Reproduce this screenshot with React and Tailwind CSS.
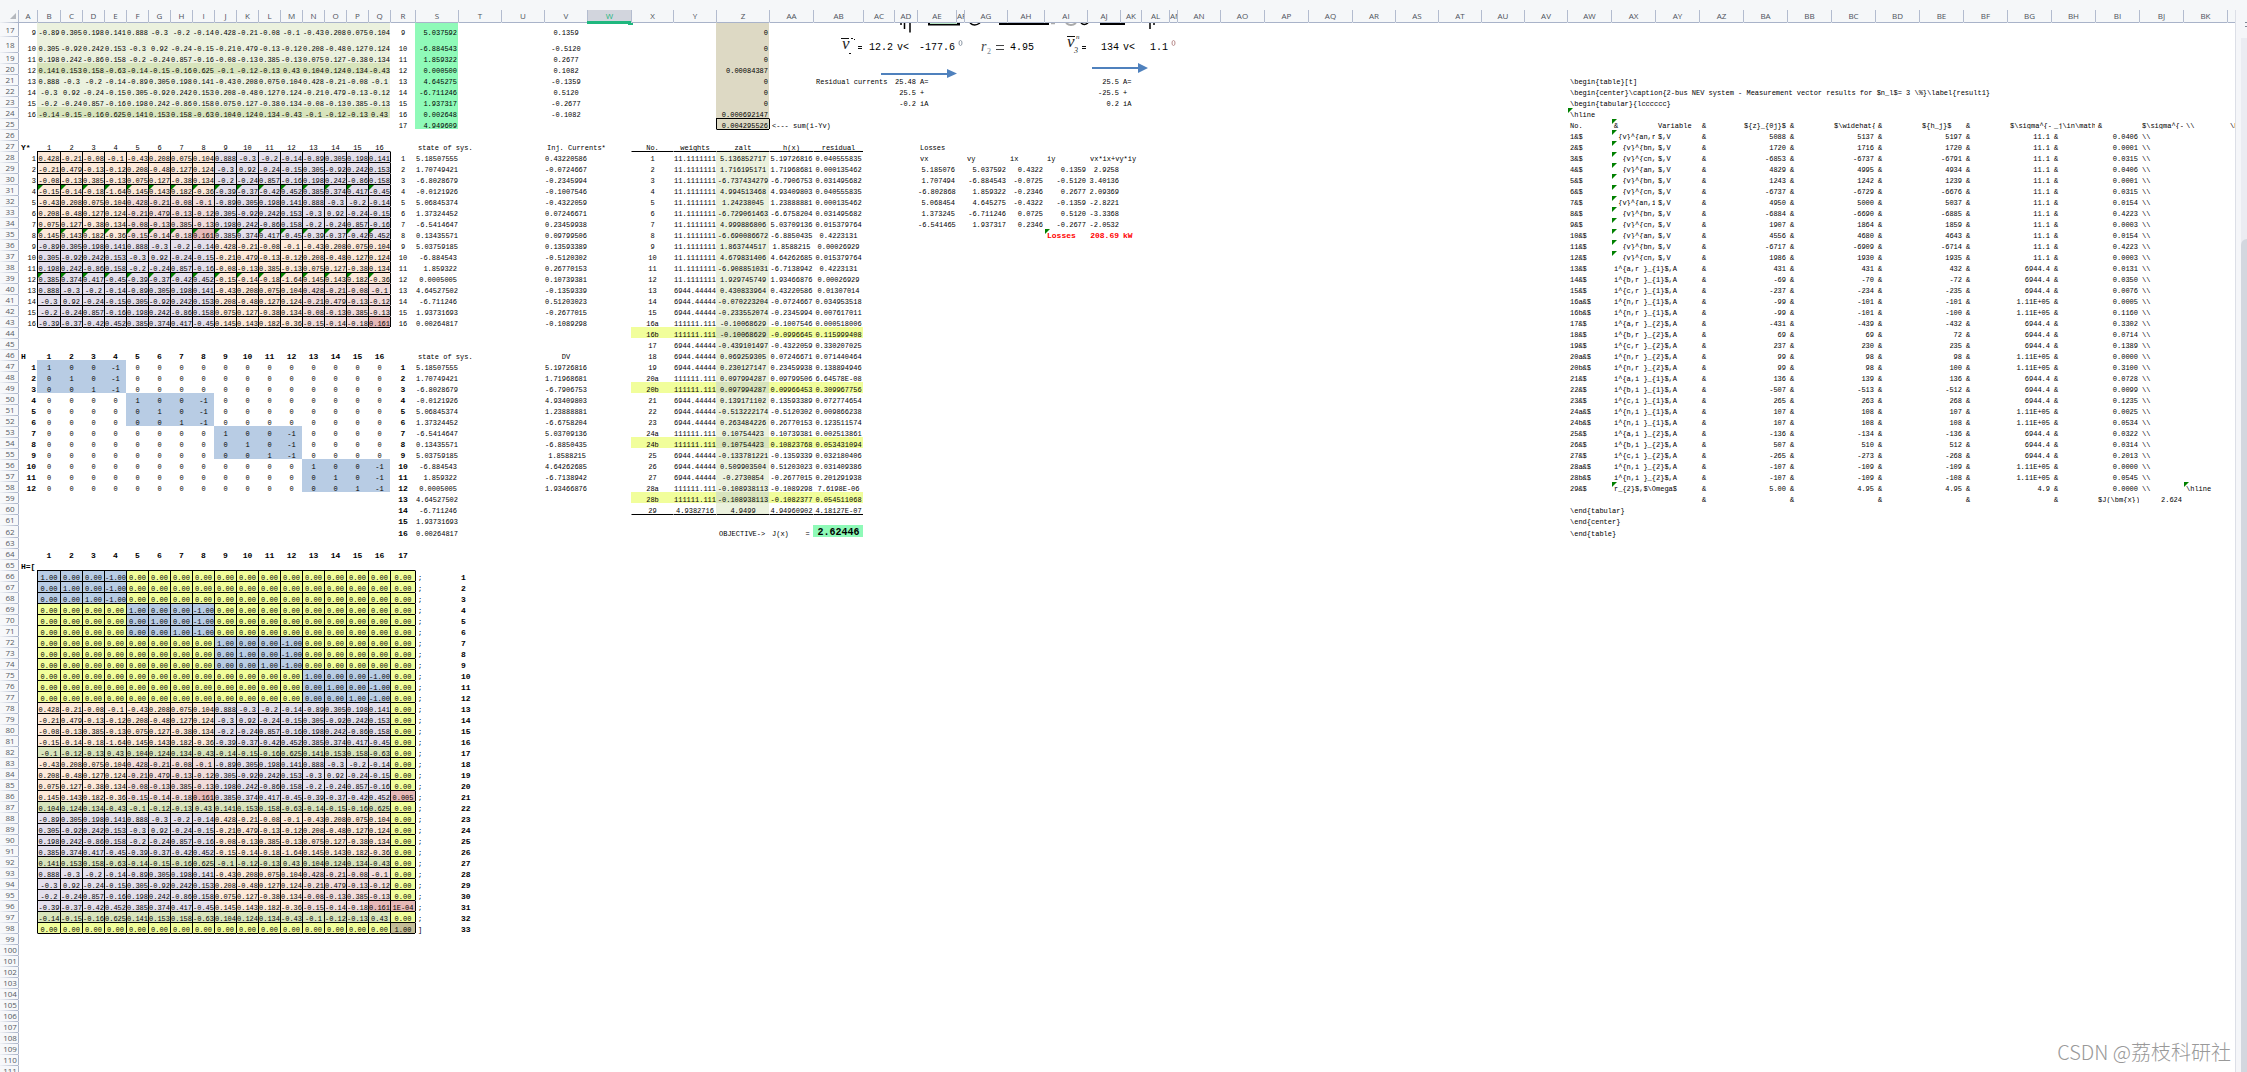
import clsx from 'clsx';

const COLS = [
  ['A', 19], ['B', 23], ['C', 22], ['D', 22], ['E', 22], ['F', 22], ['G', 22], ['H', 22], ['I', 22],
  ['J', 22], ['K', 22], ['L', 22], ['M', 22], ['N', 22], ['O', 22], ['P', 22], ['Q', 22], ['R', 25],
  ['S', 43], ['T', 43], ['U', 43], ['V', 43], ['W', 44], ['X', 42], ['Y', 43], ['Z', 53], ['AA', 44],
  ['AB', 50], ['AC', 31], ['AD', 23], ['AE', 39], ['AF', 8], ['AG', 43], ['AH', 37], ['AI', 43],
  ['AJ', 33], ['AK', 21], ['AL', 28], ['AM', 8], ['AN', 43], ['AO', 44], ['AP', 44], ['AQ', 44],
  ['AR', 43], ['AS', 43], ['AT', 43], ['AU', 43], ['AV', 43], ['AW', 44], ['AX', 44], ['AY', 44],
  ['AZ', 44], ['BA', 44], ['BB', 44], ['BC', 44], ['BD', 44], ['BE', 44], ['BF', 44], ['BG', 44],
  ['BH', 44], ['BI', 44], ['BJ', 44], ['BK', 44], ['BL', 44],
];
const ROW_HEADER = 18;
const FIRST_ROW = 17;
const LAST_ROW = 111;
const TABLE_WIDTH = ROW_HEADER + COLS.reduce((sum, c) => sum + c[1], 0);
const NAMES = COLS.map((c) => c[0]);

const rowHeight = (row) => ({ 17: 14, 18: 16, 62: 12 })[row] || 11;

const SAGE = 'bg-[#ebf1de]';
const OLIVE = 'bg-[#d8e4bc]';
const PEACH = 'bg-[#fde9d9]';
const LILAC = 'bg-[#e4dfec]';
const PINK = 'bg-[#f2dcdb]';
const ROSE = 'bg-[#e6b8b7]';
const BLUE = 'bg-[#b8cce4]';
const YELLOW = 'bg-[#f1fe9b]';
const MINT = 'bg-[#8ffab8]';
const SAND = 'bg-[#ddd9c4]';
const KHAKI = 'bg-[#c4bd97]';

const LEFT = 'text-left pl-[2px]';
const RIGHT = 'text-right pr-px';
const CENTER = 'text-center';
const BOLD = 'font-bold text-[8px]';
const BIG = 'text-[10px] leading-[8px]';
const BOX = 'border-l-black border-t-black';

// ---- cells ----
const cells = {};

function put(ref, value, ...cls) {
  const old = cells[ref] || { value: '', cls: [] };
  cells[ref] = { ...old, value: value === null ? old.value : value, cls: [...old.cls, ...cls] };
}
function putColumn(col, row, values, ...cls) {
  values.split(' ').forEach((v, i) => put(col + (row + i), v, ...cls));
}
function putRow(col, row, values, ...cls) {
  const start = NAMES.indexOf(col);
  values.split(' ').forEach((v, i) => put(NAMES[start + i] + row, v, ...cls));
}
function flag(ref) {
  put(ref, null);
  cells[ref].flag = true;
}
function count(from, to) {
  return Array.from({ length: to - from + 1 }, (_, i) => from + i).join(' ');
}

const Y_ROWS = [
  '0.428 -0.21 -0.08 -0.1 -0.43 0.208 0.075 0.104 0.888 -0.3 -0.2 -0.14 -0.89 0.305 0.198 0.141',
  '-0.21 0.479 -0.13 -0.12 0.208 -0.48 0.127 0.124 -0.3 0.92 -0.24 -0.15 0.305 -0.92 0.242 0.153',
  '-0.08 -0.13 0.385 -0.13 0.075 0.127 -0.38 0.134 -0.2 -0.24 0.857 -0.16 0.198 0.242 -0.86 0.158',
  '-0.15 -0.14 -0.18 -1.64 0.145 0.143 0.182 -0.36 -0.39 -0.37 -0.42 0.452 0.385 0.374 0.417 -0.45',
  '-0.43 0.208 0.075 0.104 0.428 -0.21 -0.08 -0.1 -0.89 0.305 0.198 0.141 0.888 -0.3 -0.2 -0.14',
  '0.208 -0.48 0.127 0.124 -0.21 0.479 -0.13 -0.12 0.305 -0.92 0.242 0.153 -0.3 0.92 -0.24 -0.15',
  '0.075 0.127 -0.38 0.134 -0.08 -0.13 0.385 -0.13 0.198 0.242 -0.86 0.158 -0.2 -0.24 0.857 -0.16',
  '0.145 0.143 0.182 -0.36 -0.15 -0.14 -0.18 0.161 0.385 0.374 0.417 -0.45 -0.39 -0.37 -0.42 0.452',
  '-0.89 0.305 0.198 0.141 0.888 -0.3 -0.2 -0.14 0.428 -0.21 -0.08 -0.1 -0.43 0.208 0.075 0.104',
  '0.305 -0.92 0.242 0.153 -0.3 0.92 -0.24 -0.15 -0.21 0.479 -0.13 -0.12 0.208 -0.48 0.127 0.124',
  '0.198 0.242 -0.86 0.158 -0.2 -0.24 0.857 -0.16 -0.08 -0.13 0.385 -0.13 0.075 0.127 -0.38 0.134',
  '0.385 0.374 0.417 -0.45 -0.39 -0.37 -0.42 0.452 -0.15 -0.14 -0.18 -1.64 0.145 0.143 0.182 -0.36',
  '0.888 -0.3 -0.2 -0.14 -0.89 0.305 0.198 0.141 -0.43 0.208 0.075 0.104 0.428 -0.21 -0.08 -0.1',
  '-0.3 0.92 -0.24 -0.15 0.305 -0.92 0.242 0.153 0.208 -0.48 0.127 0.124 -0.21 0.479 -0.13 -0.12',
  '-0.2 -0.24 0.857 -0.16 0.198 0.242 -0.86 0.158 0.075 0.127 -0.38 0.134 -0.08 -0.13 0.385 -0.13',
  '-0.39 -0.37 -0.42 0.452 0.385 0.374 0.417 -0.45 0.145 0.143 0.182 -0.36 -0.15 -0.14 -0.18 0.161',
];
const NEUTRAL_ROWS = [
  '-0.1 -0.12 -0.13 0.43 0.104 0.124 0.134 -0.43 -0.14 -0.15 -0.16 0.625 0.141 0.153 0.158 -0.63',
  '0.104 0.124 0.134 -0.43 -0.1 -0.12 -0.13 0.43 0.141 0.153 0.158 -0.63 -0.14 -0.15 -0.16 0.625',
  '0.141 0.153 0.158 -0.63 -0.14 -0.15 -0.16 0.625 -0.1 -0.12 -0.13 0.43 0.104 0.124 0.134 -0.43',
  '-0.14 -0.15 -0.16 0.625 0.141 0.153 0.158 -0.63 0.104 0.124 0.134 -0.43 -0.1 -0.12 -0.13 0.43',
];

// fill of entry (r, c) of the 16 x 16 admittance matrix
function yFill(r, c) {
  if ((r === 7 && c === 7) || (r === 15 && c === 15)) return ROSE;
  if (r < 8 !== c < 8) return LILAC;
  return r % 8 >= 4 && c % 8 >= 4 ? PINK : PEACH;
}

// top block, rows 17 - 24
[Y_ROWS[8], Y_ROWS[9], Y_ROWS[10], NEUTRAL_ROWS[2], Y_ROWS[12], Y_ROWS[13], Y_ROWS[14], NEUTRAL_ROWS[3]]
  .forEach((values, i) => putRow('B', 17 + i, values, CENTER, i % 4 === 3 ? OLIVE : SAGE));
putColumn('A', 17, count(9, 16), RIGHT);
putColumn('R', 17, count(9, 17), CENTER);
putColumn('S', 17, '5.037592 -6.884543 1.859322 0.000500 4.645275 -6.711246 1.937317 0.002648 4.949609', RIGHT, MINT);
putColumn('V', 17, '0.1359 -0.5120 0.2677 0.1082 -0.1359 0.5120 -0.2677 -0.1082', CENTER);
putColumn('Z', 17, '0 0 0 0.00084387 0 0 0 0.000692147 0.004295526', RIGHT, SAND);
put('Z25', null, BOX);
put('AA25', '<--- sum(i-Yv)', LEFT, 'border-l-black');
put('Z26', '', 'border-t-black');

// Y matrix
const STATE = '5.18507555 1.70749421 -6.8028679 -0.0121926 5.06845374 1.37324452 -6.5414647 0.13435571 5.03759185 -6.884543 1.859322 0.0005005 4.64527502 -6.711246 1.93731693 0.00264817';
put('A27', 'Y*', LEFT, BOLD);
putRow('B', 27, count(1, 16), CENTER);
putColumn('A', 28, count(1, 16), RIGHT);
Y_ROWS.forEach((line, r) => {
  line.split(' ').forEach((v, c) => {
    const ref = NAMES[c + 1] + (28 + r);
    put(ref, v, CENTER, BOX, yFill(r, c));
    if (r === 3 || r === 7 || r === 11) flag(ref);
    put(NAMES[c + 1] + 44, '', 'border-t-black');
  });
  put('R' + (28 + r), r + 1, CENTER, 'border-l-black');
});
put('S27', 'state of sys.', LEFT);
putColumn('S', 28, STATE, RIGHT);
put('V27', 'Inj. Currents*', LEFT);
putColumn('V', 28, '0.43220586 -0.0724667 -0.2345994 -0.1007546 -0.4322059 0.07246671 0.23459938 0.09799506 0.13593389 -0.5120302 0.26770153 0.10739381 -0.1359339 0.51203023 -0.2677015 -0.1089298', RIGHT);

// H, voltage part
put('A46', 'H', LEFT, BOLD);
putRow('B', 46, count(1, 16), CENTER, BOLD);
putColumn('A', 47, count(1, 12), RIGHT, BOLD);
for (let r = 0; r < 12; r++) {
  const block = Math.floor(r / 3);
  for (let c = 0; c < 16; c++) {
    const inside = Math.floor(c / 4) === block;
    const v = !inside ? 0 : c % 4 === 3 ? -1 : c % 4 === r % 3 ? 1 : 0;
    put(NAMES[c + 1] + (47 + r), v, CENTER, inside && BLUE);
    put(NAMES[c + 1] + (66 + r), v.toFixed(2), CENTER, BOX, inside ? BLUE : YELLOW);
  }
}
putColumn('R', 47, count(1, 16), CENTER, BOLD);
put('S46', 'state of sys.', LEFT);
putColumn('S', 47, STATE, RIGHT);
put('V46', 'DV', CENTER);
putColumn('V', 47, '5.19726816 1.71968681 -6.7906753 4.93409803 1.23888881 -6.6758204 5.03709136 -6.8850435 1.8588215 4.64262685 -6.7138942 1.93466876', RIGHT);

// full H
put('A65', 'H=[', LEFT, BOLD);
putRow('B', 64, count(1, 17), CENTER, BOLD);
for (let b = 0; b < 4; b++) {
  for (let k = 0; k < 5; k++) {
    const row = 78 + b * 5 + k;
    const line = k === 4 ? NEUTRAL_ROWS[b] : Y_ROWS[b * 4 + k];
    line.split(' ').forEach((v, c) => {
      put(NAMES[c + 1] + row, v, CENTER, BOX, k === 4 ? OLIVE : yFill(b * 4 + k, c));
    });
  }
}
putRow('B', 98, Array(16).fill('0.00').join(' '), CENTER, BOX, YELLOW);
for (let row = 66; row <= 98; row++) {
  const special = { 86: ['0.005', ROSE], 96: ['1E-04', ROSE], 98: ['1.00', KHAKI] }[row] || ['0.00', YELLOW];
  put('R' + row, special[0], CENTER, BOX, special[1]);
  put('S' + row, row === 98 ? ']' : ';', LEFT, 'border-l-black');
  put('T' + row, row - 65, LEFT, BOLD);
}
NAMES.slice(1, 18).forEach((name) => put(name + 99, '', 'border-t-black'));

// measurements
const MEASUREMENTS = `1 11.1111111 5.136852717 5.19726816 0.040555835
2 11.1111111 1.716195171 1.71968681 0.000135462
3 11.1111111 -6.737434279 -6.7906753 0.031495682
4 11.1111111 4.994513468 4.93409803 0.040555835
5 11.1111111 1.24238045 1.23888881 0.000135462
6 11.1111111 -6.729061463 -6.6758204 0.031495682
7 11.1111111 4.999886806 5.03709136 0.015379764
8 11.1111111 -6.690086672 -6.8850435 0.4223131
9 11.1111111 1.863744517 1.8588215 0.00026929
10 11.1111111 4.679831406 4.64262685 0.015379764
11 11.1111111 -6.908851031 -6.7138942 0.4223131
12 11.1111111 1.929745749 1.93466876 0.00026929
13 6944.44444 0.430833964 0.43220586 0.01307014
14 6944.44444 -0.070223204 -0.0724667 0.034953518
15 6944.44444 -0.233552074 -0.2345994 0.007617011
16a 111111.111 -0.10068629 -0.1007546 0.000518006
16b 111111.111 -0.10068629 -0.0996645 0.115999408
17 6944.44444 -0.439101497 -0.4322059 0.330207025
18 6944.44444 0.069259305 0.07246671 0.071440464
19 6944.44444 0.230127147 0.23459938 0.138894946
20a 111111.111 0.097994287 0.09799506 6.64578E-08
20b 111111.111 0.097994287 0.09966453 0.309967756
21 6944.44444 0.139171102 0.13593389 0.072774654
22 6944.44444 -0.513222174 -0.5120302 0.009866238
23 6944.44444 0.263484226 0.26770153 0.123511574
24a 111111.111 0.10754423 0.10739381 0.002513861
24b 111111.111 0.10754423 0.10823768 0.053431094
25 6944.44444 -0.133781221 -0.1359339 0.032180406
26 6944.44444 0.509903504 0.51203023 0.031409386
27 6944.44444 -0.2730854 -0.2677015 0.201291938
28a 111111.111 -0.108938113 -0.1089298 7.6198E-06
28b 111111.111 -0.108938113 -0.1082377 0.054511068
29 4.9382716 4.9499 4.94960902 4.18127E-07`;

putRow('X', 27, 'No. weights zalt h(x) residual', CENTER);
MEASUREMENTS.split('\n').forEach((line, i) => {
  const [no, weight, z, h, res] = line.split(' ');
  const row = 28 + i;
  const marked = no.endsWith('b');
  const top = i === 0 && 'border-t-black';
  put('X' + row, no, CENTER, marked && YELLOW, top);
  put('Y' + row, weight, CENTER, marked && YELLOW, top);
  put('Z' + row, z, CENTER, marked ? OLIVE : SAGE, top);
  put('AA' + row, h, CENTER, marked && YELLOW, top);
  put('AB' + row, res, CENTER, marked && YELLOW, top);
});
['X', 'Y', 'Z', 'AA', 'AB'].forEach((name) => put(name + 61, '', 'border-t-black'));
put('Z62', 'OBJECTIVE->', LEFT);
put('AA62', 'J(x)    =', LEFT);
put('AB62', '2.62446', CENTER, MINT, BIG, 'font-bold');

// voltages and residual currents
put('AC18', '12.2', RIGHT, BIG);
put('AD18', 'v<', LEFT, BIG);
put('AE18', '-177.6', RIGHT, BIG);
put('AH18', '4.95', LEFT, BIG);
put('AJ18', '134', RIGHT, BIG);
put('AK18', 'v<', LEFT, BIG);
put('AL18', '1.1', RIGHT, BIG);
put('AB21', 'Residual currents', LEFT);
putColumn('AD', 21, '25.48 25.5 -0.2', RIGHT);
putColumn('AE', 21, 'A= + iA', LEFT);
putColumn('AJ', 21, '25.5 -25.5 0.2', RIGHT);
putColumn('AK', 21, 'A= + iA', LEFT);

// losses
put('AE27', 'Losses', LEFT);
put('AE28', 'vx', LEFT);
put('AG28', 'vy', LEFT);
put('AH28', 'ix', LEFT);
put('AI28', 'iy', LEFT);
put('AJ28', 'vx*ix+vy*iy', LEFT);
putColumn('AE', 29, '5.185076 1.707494 -6.802868 5.068454 1.373245 -6.541465', RIGHT);
putColumn('AG', 29, '5.037592 -6.884543 1.859322 4.645275 -6.711246 1.937317', RIGHT);
putColumn('AH', 29, '0.4322 -0.0725 -0.2346 -0.4322 0.0725 0.2346', RIGHT);
putColumn('AI', 29, '0.1359 -0.5120 0.2677 -0.1359 0.5120 -0.2677', RIGHT);
putColumn('AJ', 29, '2.9258 3.40136 2.09369 -2.8221 -3.3368 -2.0532', RIGHT);
put('AI35', 'Losses', LEFT, BOLD, 'text-[#ff0000]');
flag('AI35');
put('AJ35', '208.69', RIGHT, BOLD, 'text-[#ff0000]');
put('AK35', 'kW', LEFT, BOLD, 'text-[#ff0000]');

// LaTeX export
put('AW21', '\\begin{table}[t]', LEFT);
put('AW22', '\\begin{center}\\caption{2-bus NEV system - Measurement vector results for $n_l$= 3 \\%}\\label{result1}', LEFT);
put('AW23', '\\begin{tabular}{lcccccc}', LEFT);
put('AW24', '\\hline', LEFT);
flag('AW24');
put('AW25', 'No.', LEFT);
put('AX25', '&', LEFT);
flag('AX25');
put('AY25', 'Variable', LEFT);
put('BA25', '${z}_{0j}$', RIGHT);
put('BC25', '$\\widehat{z', LEFT, 'overflow-hidden');
put('BE25', '${h_j}$', LEFT);
put('BG25', '$\\sigma^{-2', LEFT, 'overflow-hidden');
put('BH25', '_j\\in\\mathb', LEFT, 'overflow-hidden');
put('BI25', '&', LEFT);
put('BJ25', '$\\sigma^{-2', LEFT, 'overflow-hidden');
put('BK25', '\\\\', LEFT);
put('BL25', '\\hline', LEFT);
['AZ', 'BB', 'BD', 'BF'].forEach((name) => put(name + 25, '&', LEFT));

const LABELS = MEASUREMENTS.split('\n').map((line) => line.split(' ')[0]);
LABELS.forEach((label, i) => {
  const row = 26 + i;
  put('AW' + row, label + '&$', LEFT);
  ['AZ', 'BB', 'BD', 'BF', 'BH'].forEach((name) => put(name + row, '&', LEFT));
  put('BJ' + row, '\\\\', LEFT);
  if (i < 12) {
    const phase = ['an', 'bn', 'cn'][i % 3];
    const part = i < 6 ? 'r' : 'i';
    const indent = i % 6 === 0 ? ' ' : '  ';
    put('AX' + row, `${indent}{v}^{${phase},${part}`, LEFT, 'overflow-hidden');
    put('AY' + row, '$,V', LEFT);
    flag('AX' + row);
  } else if (i < 32) {
    const k = i - 12;
    const phase = ['a', 'b', 'c', 'n', 'n'][k % 5];
    put('AX' + row, `i^{${phase},${k < 10 ? 'r' : 'i'} }_{${Math.floor(k / 5) % 2 + 1}}$,A`, LEFT);
  }
});
put('AX58', 'r_{2}$,$\\Omega$', LEFT);
flag('AX58');
putColumn('BA', 26, '5088 1720 -6853 4829 1243 -6737 4950 -6884 1907 4556 -6717 1986 431 -69 -237 -99 -99 -431 69 237 99 99 136 -507 265 107 107 -136 507 -265 -107 -107 5.00', RIGHT);
putColumn('BC', 26, '5137 1716 -6737 4995 1242 -6729 5000 -6690 1864 4680 -6909 1930 431 -70 -234 -101 -101 -439 69 230 98 98 139 -513 263 108 108 -134 510 -273 -109 -109 4.95', RIGHT);
putColumn('BE', 26, '5197 1720 -6791 4934 1239 -6676 5037 -6885 1859 4643 -6714 1935 432 -72 -235 -101 -100 -432 72 235 98 100 136 -512 268 107 108 -136 512 -268 -109 -108 4.95', RIGHT);
putColumn('BG', 26, '11.1 11.1 11.1 11.1 11.1 11.1 11.1 11.1 11.1 11.1 11.1 11.1 6944.4 6944.4 6944.4 1.11E+05 1.11E+05 6944.4 6944.4 6944.4 1.11E+05 1.11E+05 6944.4 6944.4 6944.4 1.11E+05 1.11E+05 6944.4 6944.4 6944.4 1.11E+05 1.11E+05 4.9', RIGHT);
putColumn('BI', 26, '0.0406 0.0001 0.0315 0.0406 0.0001 0.0315 0.0154 0.4223 0.0003 0.0154 0.4223 0.0003 0.0131 0.0350 0.0076 0.0005 0.1160 0.3302 0.0714 0.1389 0.0000 0.3100 0.0728 0.0099 0.1235 0.0025 0.0534 0.0322 0.0314 0.2013 0.0000 0.0545 0.0000', RIGHT);
put('BK58', '\\hline', LEFT);
flag('BK58');
['AZ', 'BB', 'BD', 'BF', 'BH'].forEach((name) => put(name + 59, '&', LEFT));
put('BI59', '$J(\\bm{x})$', LEFT, 'overflow-hidden');
put('BJ59', '2.624', RIGHT);
put('AW60', '\\end{tabular}', LEFT);
put('AW61', '\\end{center}', LEFT);
put('AW62', '\\end{table}', LEFT);

// cells that touch the row or column headers carry the header rule
function Cell({ cell, left, top }) {
  return (
    <td
      className={clsx(
        'relative whitespace-pre border-l border-t border-transparent p-0 align-bottom',
        left && 'border-l-[#a9b3c9]',
        top && 'border-t-[#a9b3c9]',
        cell && cell.cls
      )}
    >
      {cell && cell.flag && (
        <span className="absolute left-0 top-0 size-[5px] bg-[#008000] [clip-path:polygon(0_0,100%_0,0_100%)]" />
      )}
      {cell && cell.value}
    </td>
  );
}

function ColumnHeader({ name }) {
  const active = name === 'W';
  return (
    <th
      scope="col"
      className={clsx(
        'relative whitespace-nowrap border-l border-[#b3bccf] p-0 text-center align-middle font-normal',
        active ? 'bg-[#d2d5dd] text-[#1fb77e]' : 'text-[#4d525b]',
        name.length > 1 && 'overflow-hidden'
      )}
    >
      {name}
      {active && (
        <>
          <span className="absolute -bottom-[2px] -left-px right-0 z-10 h-[3px] bg-[#1fb77e]" />
          <span className="absolute -bottom-[3px] -right-[2px] z-10 h-[2px] w-[5px] bg-[#1fb77e]" />
        </>
      )}
    </th>
  );
}

function Sheet() {
  const rows = [];
  for (let row = FIRST_ROW; row <= LAST_ROW; row++) rows.push(row);

  return (
    <table
      className="table-fixed border-separate border-spacing-0 bg-white font-['Liberation_Mono',monospace] text-[7px] leading-[6px] text-black"
      style={{ width: TABLE_WIDTH }}
    >
      <colgroup>
        <col style={{ width: ROW_HEADER }} />
        {COLS.map(([name, width]) => (
          <col key={name} style={{ width }} />
        ))}
      </colgroup>
      <thead className="bg-[#f5f7f9] font-['Open_Sans',sans-serif] text-[8px] leading-[12px]">
        <tr className="h-[12px]">
          <td className="p-0">
            <svg className="ml-auto mr-[2px] block size-[6px]" viewBox="0 0 6 6" aria-hidden="true">
              <path d="M6 0V6H0Z" fill="#b4b8be" />
            </svg>
          </td>
          {NAMES.map((name) => (
            <ColumnHeader key={name} name={name} />
          ))}
        </tr>
      </thead>
      <tbody>
        {rows.map((row) => (
          <tr key={row} style={{ height: rowHeight(row) }}>
            <th
              scope="row"
              className="bg-[#f7f8fa] bg-[linear-gradient(to_right,#f0f2f5,#a9b3c9)] bg-[length:100%_1px] bg-no-repeat p-0 pl-[2px] text-center align-middle font-['Open_Sans',sans-serif] text-[8px] font-normal leading-[11px] text-[#555a63]"
            >
              {row}
            </th>
            {NAMES.map((name, i) => (
              <Cell key={name} cell={cells[name + row]} left={i === 0} top={row === FIRST_ROW} />
            ))}
          </tr>
        ))}
      </tbody>
    </table>
  );
}

// equations and arrows that float over the grid
function Drawings() {
  return (
    <svg
      className="pointer-events-none absolute left-[820px] top-[13px]"
      width="360"
      height="70"
      viewBox="820 23 360 70"
      fontFamily="'Liberation Serif', serif"
      aria-hidden="true"
    >
      <path d="M901 23V25M904.5 23V29M910 23V32.5" stroke="#000" strokeWidth="1.5" />
      <path d="M928 23H960V25.5H928Z" fill="#000" />
      <path d="M930 23H957V24H930Z" fill="#b9e8c4" />
      <path d="M970 23Q974.5 27 980 23" stroke="#000" strokeWidth="1.5" fill="none" />
      <path d="M999 23H1049V25H999Z" fill="#000" />
      <path d="M1051 23.5H1055" stroke="#aaa" strokeWidth="1.5" />
      <path d="M1066 23Q1071 27 1076 23" stroke="#aaa" strokeWidth="2" fill="none" />
      <path d="M1081 23Q1084 26 1088 23" stroke="#000" strokeWidth="1.5" fill="none" />
      <path d="M1100 23H1125V25H1100Z" fill="#000" />
      <path d="M1150 23V29M1154 23V25" stroke="#000" strokeWidth="1.5" />

      <path d="M841 38.5H849M851 38.5H853M854 39.5H855" stroke="#111" />
      <text x="842" y="49" fontSize="17" fontStyle="italic" fill="#222">v</text>
      <path d="M849 53.5H851" stroke="#111" />
      <path d="M858 46.5H862M858 48.5H862" stroke="#111" />

      <text x="981" y="51" fontSize="14" fontStyle="italic" fill="#444">r</text>
      <text x="987" y="54" fontSize="8" fill="#7b8794">2</text>
      <path d="M996 45.5H1004M996 49.5H1004" stroke="#444" />

      <path d="M1067 36.5H1075" stroke="#111" />
      <text x="1067" y="47" fontSize="17" fontStyle="italic" fill="#222">v</text>
      <text x="1076" y="39" fontSize="7" fontStyle="italic" fill="#222">n</text>
      <text x="1074" y="53" fontSize="8" fontStyle="italic" fill="#222">3</text>
      <path d="M1082 46.5H1086M1082 48.5H1086" stroke="#111" />

      <ellipse cx="960.5" cy="43" rx="1.5" ry="2.5" fill="none" stroke="#8b97a5" />
      <ellipse cx="1173.5" cy="43" rx="1.5" ry="2.5" fill="none" stroke="#b98b8b" />

      <g fill="#4f81bd">
        <path d="M881 73H947V69L957 73.5L947 78V75H881Z" />
        <path d="M1092 67H1138V63L1148 68L1138 73V69H1092Z" />
      </g>
    </svg>
  );
}

function ScrollRail() {
  return (
    <div className="flex w-[12px] shrink-0 flex-col border-l border-[#dcdfe7] bg-[#f5f6f9]">
      <div className="flex h-[28px] items-center justify-end">
        <span className="h-[5px] w-[2px] border-y border-[#7c8494]" />
      </div>
      <div className="ml-[5px] flex-1 bg-[#ebecf2] pt-[201px]">
        <div className="h-full rounded-tl-md bg-[#d3d7df]" />
      </div>
    </div>
  );
}

export default function App() {
  return (
    <div className="relative flex h-screen flex-col overflow-hidden bg-[#f5f7f9]">
      <div className="h-[10px] shrink-0" />
      <div className="flex min-h-0 flex-1">
        <main className="relative min-w-0 flex-1 overflow-hidden bg-white">
          <Sheet />
          <Drawings />
        </main>
        <ScrollRail />
      </div>
      <p className="absolute bottom-[6px] right-[16px] font-['Noto_Sans_CJK_SC',sans-serif] text-[20px] font-light leading-[28px] text-[#999]">
        CSDN @荔枝科研社
      </p>
    </div>
  );
}
